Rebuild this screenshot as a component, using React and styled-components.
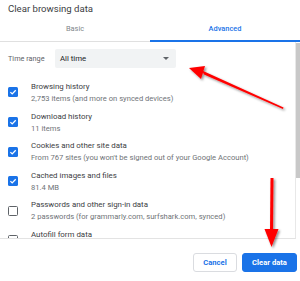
import React from "react";
import styled, { createGlobalStyle } from "styled-components";

const GlobalStyle = createGlobalStyle`
  html, body {
    margin: 0;
    padding: 0;
    background: #fff;
  }
  body {
    font-family: Roboto, "Liberation Sans", Arial, sans-serif;
    color: #202124;
  }
  * {
    box-sizing: border-box;
  }
`;

const Dialog = styled.div`
  position: relative;
  width: 300px;
  height: 281px;
  display: flex;
  flex-direction: column;
  overflow: hidden;
  background: #fff;
`;

const Title = styled.h1`
  margin: 0;
  padding: 3px 8px 0;
  height: 17px;
  font-size: 9.6px;
  line-height: 12px;
  font-weight: 400;
  color: #3c4043;
`;

const Tabs = styled.div`
  display: grid;
  grid-template-columns: 1fr 1fr;
  height: 25px;
  border-bottom: 1px solid #e0e0e0;
`;

const Tab = styled.div`
  display: flex;
  align-items: center;
  justify-content: center;
  font-size: 7.4px;
  color: ${p => (p.active ? "#1a73e8" : "#80868b")};
  font-weight: ${p => (p.active ? 500 : 400)};
  border-bottom: 2px solid ${p => (p.active ? "#1a73e8" : "transparent")};
  margin-bottom: -1px;
`;

const Body = styled.div`
  position: relative;
  height: 197px;
  flex: none;
  border-bottom: 1px solid #e3e3e3;
  border-right: 1px solid #e8e8e8;
  margin-right: 4px;
  padding: 7px 0 0 8px;
  overflow: hidden;
`;

const Scrollbar = styled.div`
  position: absolute;
  right: 0;
  top: 43px;
  width: 4px;
  height: 135px;
  background: #c8c8c8;
`;

const RangeRow = styled.div`
  display: flex;
  align-items: center;
  height: 19px;
  margin-bottom: 9.7px;
`;

const RangeLabel = styled.span`
  width: 47px;
  font-size: 7.3px;
  color: #5f6368;
`;

const Select = styled.div`
  width: 121px;
  height: 19px;
  padding: 0 7px 0 5px;
  background: #f1f3f4;
  border-radius: 2px;
  display: flex;
  align-items: center;
  justify-content: space-between;
  font-size: 7.8px;
  color: #202124;
`;

const Caret = styled.span`
  width: 0;
  height: 0;
  border-left: 3px solid transparent;
  border-right: 3px solid transparent;
  border-top: 3px solid #5f6368;
`;

const Item = styled.div`
  display: flex;
  align-items: center;
  height: 29.6px;
`;

const Box = styled.span`
  flex: none;
  width: 10px;
  height: 10px;
  margin-right: 13px;
  border-radius: 1.5px;
  background: ${p => (p.checked ? "#1a73e8" : "#fff")};
  border: ${p => (p.checked ? "none" : "1.4px solid #5f6368")};
  display: flex;
  align-items: center;
  justify-content: center;
`;

const Texts = styled.div`
  display: flex;
  flex-direction: column;
  white-space: nowrap;
`;

const ItemTitle = styled.span`
  font-size: 7.9px;
  line-height: 11px;
  color: #3c4043;
`;

const ItemSub = styled.span`
  font-size: 7.6px;
  line-height: 11px;
  min-height: 11px;
  margin-top: 1px;
  color: #6f7377;
`;

const Footer = styled.div`
  display: flex;
  justify-content: flex-end;
  gap: 5px;
  padding: 14px 3px 0 0;
`;

const Button = styled.button`
  height: 19px;
  padding: 0;
  width: ${p => (p.primary ? "55px" : "44px")};
  border-radius: 3px;
  font-family: inherit;
  font-size: 7.6px;
  font-weight: 700;
  border: 1px solid ${p => (p.primary ? "#1a73e8" : "#dadce0")};
  background: ${p => (p.primary ? "#1a73e8" : "#fff")};
  color: ${p => (p.primary ? "#fff" : "#1a73e8")};
`;

const Overlay = styled.svg`
  position: absolute;
  left: 0;
  top: 0;
  pointer-events: none;
`;

const items = [
  { title: "Browsing history", sub: "2,753 items (and more on synced devices)", checked: true },
  { title: "Download history", sub: "11 items", checked: true },
  { title: "Cookies and other site data", sub: "From 767 sites (you won't be signed out of your Google Account)", checked: true },
  { title: "Cached images and files", sub: "81.4 MB", checked: true },
  { title: "Passwords and other sign-in data", sub: "2 passwords (for grammarly.com, surfshark.com, synced)", checked: false },
  { title: "Autofill form data", sub: "", checked: false }
];

const Check = () => (
  <svg width="8" height="8" viewBox="0 0 8 8">
    <path d="M1.4 4.1 L3.2 5.9 L6.7 2.2" fill="none" stroke="#fff" strokeWidth="1.3" />
  </svg>
);

const Arrows = () => (
  <Overlay width="300" height="281" viewBox="0 0 300 281">
    <defs>
      <filter id="shadow" x="-20%" y="-20%" width="140%" height="140%">
        <feDropShadow dx="1.5" dy="1.5" stdDeviation="1.2" floodColor="#000" floodOpacity="0.45" />
      </filter>
    </defs>
    <g filter="url(#shadow)" fill="#f00">
      <polygon points="189,68 205,66 201,79" />
      <polygon points="202,70.5 204,74.5 283,109 283.5,107.5" />
      <polygon points="270.5,178 273.5,178 273,231 270,231" />
      <polygon points="264.5,229 278.5,229 271.5,247" />
    </g>
  </Overlay>
);

export default function App() {
  return (
    <>
      <GlobalStyle />
      <Dialog>
        <Title>Clear browsing data</Title>
        <Tabs>
          <Tab>Basic</Tab>
          <Tab active>Advanced</Tab>
        </Tabs>
        <Body>
          <RangeRow>
            <RangeLabel>Time range</RangeLabel>
            <Select>
              All time
              <Caret />
            </Select>
          </RangeRow>
          {items.map(it => (
            <Item key={it.title}>
              <Box checked={it.checked}>{it.checked && <Check />}</Box>
              <Texts>
                <ItemTitle>{it.title}</ItemTitle>
                <ItemSub>{it.sub}</ItemSub>
              </Texts>
            </Item>
          ))}
        </Body>
        <Scrollbar />
        <Footer>
          <Button>Cancel</Button>
          <Button primary>Clear data</Button>
        </Footer>
        <Arrows />
      </Dialog>
    </>
  );
}
